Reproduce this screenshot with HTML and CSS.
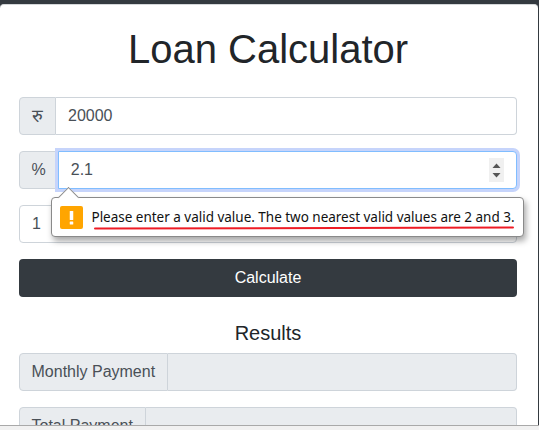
FILE: index.html
```html
<!DOCTYPE html>
<html lang="en">
<head>
    <meta charset="UTF-8">
    <title>Loan Calculator</title>
    <link rel="stylesheet" href="styles.css">
</head>
<body>
    <div class="card">
        <h1>Loan Calculator</h1>

        <div class="input-group">
            <span class="addon addon-rupee">रु</span>
            <div class="field">20000</div>
        </div>

        <div class="input-group">
            <span class="addon">%</span>
            <div class="field field-focus">
                <span>2.1</span>
                <span class="spinner">
                    <svg width="15" height="24" viewBox="0 0 15 24">
                        <rect width="15" height="24" fill="#f0f0f0"/>
                        <path d="M3.500 10h8l-4-4.500z" fill="#555"/>
                        <path d="M3.500 15h8l-4 4.500z" fill="#555"/>
                    </svg>
                </span>
            </div>
            <!-- Browser validation bubble -->
            <div class="bubble">
                <svg class="bubble-icon" width="23" height="23" viewBox="0 0 23 23">
                    <rect width="23" height="23" rx="2" fill="#ffa500"/>
                    <rect x="9.750" y="5" width="3.500" height="9" rx="0.500" fill="#fff"/>
                    <rect x="9.750" y="15.500" width="3.500" height="3" rx="0.500" fill="#fff"/>
                </svg>
                <span class="bubble-text">Please enter a valid value. The two nearest valid values are 2 and 3.</span>
            </div>
        </div>

        <div class="input-group">
            <div class="field field-full">1</div>
        </div>

        <button class="btn-calc">Calculate</button>

        <h3>Results</h3>

        <div class="input-group">
            <span class="addon">Monthly Payment</span>
            <div class="field field-readonly"></div>
        </div>

        <div class="input-group">
            <span class="addon">Total Payment</span>
            <div class="field field-readonly"></div>
        </div>
    </div>

    <div class="status-bar"></div>
</body>
</html>
```

FILE: styles.css
```css
* {
    margin: 0;
    padding: 0;
    box-sizing: border-box;
}

html, body {
    height: 430px;
    overflow: hidden;
}

body {
    background: #343a40;
    color: #212529;
    font-family: "Liberation Sans", Arial, sans-serif;
    font-size: 16px;
    padding: 4px 1px 0 0;
}

.card {
    background: #fff;
    border-top: 1px solid #d5d8da;
    border-radius: 4px 4px 0 0;
    height: 600px;
    padding: 0 21px 0 19px;
}

h1 {
    font-size: 40px;
    font-weight: 400;
    line-height: 48px;
    text-align: center;
    margin-top: 20px;
    margin-bottom: 24px;
}

h3 {
    font-size: 20px;
    font-weight: 400;
    line-height: 24px;
    text-align: center;
    margin-top: 24px;
    margin-bottom: 8px;
}

.input-group {
    display: flex;
    position: relative;
    height: 38px;
    margin-bottom: 16px;
}

.addon {
    display: flex;
    align-items: center;
    padding: 0 12px 0 11.500px;
    background: #e9ecef;
    border: 1px solid #ced4da;
    border-radius: 4px 0 0 4px;
    color: #495057;
    line-height: 24px;
}

.addon-rupee {
    width: 37px;
    font-size: 18px;
}

.field {
    flex: 1;
    display: flex;
    align-items: center;
    justify-content: space-between;
    padding: 0 12px;
    background: #fff;
    border: 1px solid #ced4da;
    border-left: none;
    border-radius: 0 4px 4px 0;
    color: #495057;
}

.field-full {
    border-left: 1px solid #ced4da;
    border-radius: 4px;
}

.field-focus {
    border: 1px solid #80bdff;
    box-shadow: 0 0 0 3px #c6d4fb;
    margin-left: -1px;
    position: relative;
}

.field-readonly {
    background: #e9ecef;
}

.spinner {
    display: flex;
}

.btn-calc {
    display: block;
    width: 100%;
    height: 38px;
    background: #343a40;
    color: #fff;
    border: none;
    border-radius: 4px;
    font-family: inherit;
    font-size: 16px;
}

.bubble {
    position: absolute;
    top: 46px;
    left: 32px;
    z-index: 10;
    display: flex;
    align-items: center;
    gap: 9px;
    width: 473px;
    height: 40px;
    padding: 0 8px;
    background: #fff;
    border: 1px solid #8a8a8a;
    border-radius: 4px;
    box-shadow: 2px 4px 6px rgba(0, 0, 0, 0.35);
    color: #111;
    font-family: "Noto Sans", sans-serif;
    font-size: 13.500px;
    letter-spacing: -0.015px;
    white-space: nowrap;
}

/* little arrow on top of the bubble */
.bubble::before {
    content: "";
    position: absolute;
    top: -8px;
    left: 9px;
    width: 14px;
    height: 14px;
    background: #fff;
    border-top: 1px solid #8a8a8a;
    border-left: 1px solid #8a8a8a;
    transform: rotate(45deg);
}

.bubble-icon {
    flex: none;
    position: relative;
}

.bubble-text {
    position: relative;
    margin-left: -0.500px;
    margin-top: -1px;
}

/* red annotation line under the message */
.bubble-text::after {
    content: "";
    position: absolute;
    left: 2px;
    right: 1px;
    bottom: -3px;
    height: 2px;
    background: #ee1c25;
    border-radius: 1px;
    transform: rotate(-0.15deg);
}

.status-bar {
    position: fixed;
    left: 0;
    right: 0;
    bottom: 0;
    height: 5px;
    background: #f1f1f1;
    border-top: 1px solid #a9a9a9;
    z-index: 20;
}
```
